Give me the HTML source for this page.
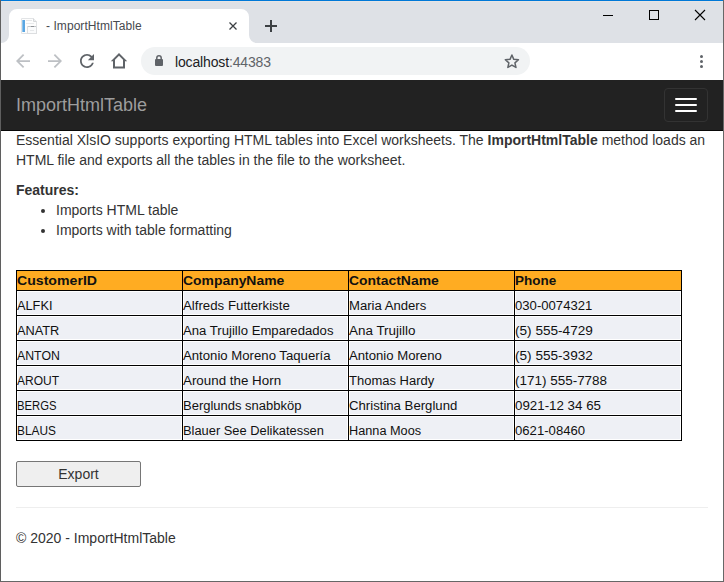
<!DOCTYPE html>
<html><head><meta charset="utf-8">
<style>
*{box-sizing:border-box}
html,body{margin:0;padding:0;width:724px;height:582px;overflow:hidden;background:#fff}
body{position:relative;font-family:"Liberation Sans",sans-serif}
.abs{position:absolute}
#strip{left:0;top:0;width:724px;height:43px;background:#dee1e6}
#blue{left:1px;top:0;width:722px;height:1px;background:#0078d7}
#blue2{left:1px;top:1px;width:722px;height:1px;background:#e7e5e4}
#bl{left:0;top:0;width:1px;height:582px;background:#5f5f5f}
#br{left:723px;top:0;width:1px;height:582px;background:#676767}
#bb{left:0;top:581px;width:724px;height:1px;background:#666}
#toolbar{left:1px;top:43px;width:722px;height:37px;background:#fff}
#omni{left:141px;top:47px;width:389px;height:28px;border-radius:14px;background:#f1f3f4}
.tabtitle{left:46px;top:18px;font-size:12px;color:#474a4f;letter-spacing:0.06px;white-space:nowrap;line-height:16px}
.url{left:175px;top:52.5px;font-size:14px;line-height:18px;letter-spacing:-0.15px;color:#202124;white-space:nowrap}
.url span{color:#5f6368}
#nav{left:1px;top:80px;width:722px;height:50px;background:#222}
#navb{left:1px;top:130px;width:722px;height:1px;background:#080808}
.brand{left:16px;top:95px;font-size:18px;line-height:20px;color:#9d9d9d;white-space:nowrap}
#toggle{left:664px;top:88px;width:44px;height:34px;border:1px solid #333;border-radius:4px}
.bar{left:675px;width:22px;height:2px;border-radius:1px;background:#fff}
#page{left:1px;top:80px;width:722px;height:501px;overflow:hidden}
.c{position:absolute;left:16px;width:692px;font-size:14px;line-height:20px;color:#333}
.c p{margin:0}
ul{margin:0;padding-left:40px}
#tbl{left:16px;top:270px;width:666px;height:171px;background:#000}
.cell{position:absolute;background:#eef0f5;box-shadow:inset 0 0 0 1px #fff;font-family:"Liberation Sans",sans-serif;font-size:12px;color:#111;white-space:nowrap;overflow:hidden}
.hd{background:#ffac22;box-shadow:none;font-weight:bold}
.t{position:absolute;left:0px;line-height:14px;transform-origin:0 0}
#btn{left:16px;top:461px;width:125px;height:26px;background:#efefef;border:1px solid #767676;border-radius:2px;font-size:14px;color:#333;text-align:center;line-height:24px}
#hr{left:16px;top:507px;width:692px;height:1px;background:#eee}
</style></head><body>
<div id="strip" class="abs"></div>
<svg class="abs" style="left:0;top:0" width="724" height="43">
  <path d="M1 43 A8 8 0 0 0 9 35 V17 A8 8 0 0 1 17 9 H241 A8 8 0 0 1 249 17 V35 A8 8 0 0 0 257 43 Z" fill="#fff"/>
</svg>
<div id="blue" class="abs"></div>
<div id="blue2" class="abs"></div>
<div id="toolbar" class="abs"></div>
<div id="omni" class="abs"></div>
<svg class="abs" style="left:0;top:0" width="724" height="80" id="icons">
  <!-- favicon -->
  <path d="M21.5 18.5 H33.5 L36.5 21.5 V33.5 H21.5 Z" fill="#fdfdfd" stroke="#e2e4e6" stroke-width="1"/>
  <path d="M33.5 18.5 V21.5 H36.5" fill="#eceef0" stroke="#d6d8da" stroke-width="1"/>
  <rect x="22" y="20" width="3" height="12" fill="#5aa6e2"/>
  <rect x="22" y="20" width="1" height="12" fill="#8cc4ee"/>
  <line x1="26" y1="20.5" x2="32" y2="20.5" stroke="#e4e6e8" stroke-width="1"/>
  <line x1="26" y1="23.5" x2="34" y2="23.5" stroke="#e8eaec" stroke-width="1"/>
  <rect x="27.5" y="26.5" width="9" height="7" fill="#fafbfc" stroke="#dcdee0" stroke-width="1"/>
  <line x1="28" y1="26.5" x2="36" y2="26.5" stroke="#c4c7ca" stroke-width="1"/>
  <line x1="31" y1="26.5" x2="34" y2="26.5" stroke="#8f9296" stroke-width="1"/>
  <line x1="30" y1="30.5" x2="34" y2="30.5" stroke="#e6e8ea" stroke-width="1"/>
  <!-- tab close -->
  <path d="M229.5 22.5 L236.5 29.5 M236.5 22.5 L229.5 29.5" stroke="#3c4043" stroke-width="1.25" fill="none"/>
  <!-- new tab plus -->
  <path d="M271 20 V32 M265 26 H277" stroke="#3c4043" stroke-width="2" fill="none"/>
  <!-- window controls -->
  <line x1="603" y1="15.5" x2="613" y2="15.5" stroke="#000" stroke-width="1"/>
  <rect x="649.5" y="10.5" width="9" height="9" fill="none" stroke="#000" stroke-width="1"/>
  <path d="M695 10 L705 20 M705 10 L695 20" stroke="#000" stroke-width="1.1" fill="none"/>
  <!-- back -->
  <g transform="translate(12.5,50.5) scale(0.875)"><path d="M20 11H7.83l5.59-5.59L12 4l-8 8 8 8 1.41-1.41L7.83 13H20v-2z" fill="#bdc0c4"/></g>
  <!-- forward -->
  <g transform="translate(44.5,50.5) scale(0.875)"><path d="M4 11h12.17l-5.59-5.59L12 4l8 8-8 8-1.41-1.41L16.17 13H4v-2z" fill="#bdc0c4"/></g>
  <!-- reload -->
  <g transform="translate(76.5,50.5) scale(0.875)"><path d="M17.65 6.35C16.2 4.9 14.21 4 12 4c-4.42 0-7.99 3.58-7.99 8s3.57 8 7.99 8c3.73 0 6.84-2.55 7.73-6h-2.08c-.82 2.33-3.04 4-5.65 4-3.31 0-6-2.69-6-6s2.69-6 6-6c1.66 0 3.14.69 4.22 1.78L13 11h7V4l-2.35 2.35z" fill="#5f6368"/></g>
  <!-- home -->
  <path d="M119 53 L127.2 61.2 H125 V68.5 H113 V61.2 H110.8 Z M119 55.8 L123 59.8 V66.5 H115 V59.8 Z" fill="#5f6368" fill-rule="evenodd"/>
  <!-- lock -->
  <rect x="155" y="59" width="8" height="7" rx="1" fill="#5f6368"/>
  <path d="M156.8 59.5 V58 A2.2 2.2 0 0 1 161.2 58 V59.5" stroke="#5f6368" stroke-width="1.5" fill="none"/>
  <!-- star -->
  <polygon points="511.90,55.00 513.77,59.33 518.46,59.77 514.92,62.88 515.96,67.48 511.90,65.07 507.84,67.48 508.88,62.88 505.34,59.77 510.03,59.33" fill="none" stroke="#5f6368" stroke-width="1.5" stroke-linejoin="round"/>
  <!-- menu dots -->
  <circle cx="701.5" cy="56.5" r="1.5" fill="#5f6368"/>
  <circle cx="701.5" cy="61.5" r="1.5" fill="#5f6368"/>
  <circle cx="701.5" cy="66.5" r="1.5" fill="#5f6368"/>
</svg>
<div class="abs tabtitle">- ImportHtmlTable</div>
<div class="abs url">localhost<span>:44383</span></div>

<div id="nav" class="abs"></div>
<div id="navb" class="abs"></div>
<div class="abs brand">ImportHtmlTable</div>
<div id="toggle" class="abs"></div>
<div class="abs bar" style="top:98px"></div>
<div class="abs bar" style="top:104px"></div>
<div class="abs bar" style="top:110px"></div>

<div class="c" style="top:130px">
<p>Essential XlsIO supports exporting HTML tables into Excel worksheets. The <b>ImportHtmlTable</b> method loads an HTML file and exports all the tables in the file to the worksheet.</p>
</div>
<div class="c" style="top:180px"><b>Features:</b>
<ul><li>Imports HTML table</li><li>Imports with table formatting</li></ul>
</div>

<div id="tbl" class="abs"></div>
<!--TBL-->
<div class="cell hd" style="left:17px;top:271px;width:165px;height:19px"><span class="t" style="top:3px;transform:scaleX(1.1765)">CustomerID</span></div>
<div class="cell hd" style="left:183px;top:271px;width:165px;height:19px"><span class="t" style="top:3px;transform:scaleX(1.1591)">CompanyName</span></div>
<div class="cell hd" style="left:349px;top:271px;width:165px;height:19px"><span class="t" style="top:3px;transform:scaleX(1.1604)">ContactName</span></div>
<div class="cell hd" style="left:515px;top:271px;width:166px;height:19px"><span class="t" style="top:3px;transform:scaleX(1.1220)">Phone</span></div>
<div class="cell" style="left:17px;top:291px;width:165px;height:24px"><span class="t" style="top:8px;transform:scaleX(1.0634)">ALFKI</span></div>
<div class="cell" style="left:183px;top:291px;width:165px;height:24px"><span class="t" style="top:8px;transform:scaleX(1.1041)">Alfreds Futterkiste</span></div>
<div class="cell" style="left:349px;top:291px;width:165px;height:24px"><span class="t" style="top:8px;transform:scaleX(1.0928)">Maria Anders</span></div>
<div class="cell" style="left:515px;top:291px;width:166px;height:24px"><span class="t" style="top:8px;transform:scaleX(1.0928)">030-0074321</span></div>
<div class="cell" style="left:17px;top:316px;width:165px;height:24px"><span class="t" style="top:8px;transform:scaleX(1.0641)">ANATR</span></div>
<div class="cell" style="left:183px;top:316px;width:165px;height:24px"><span class="t" style="top:8px;transform:scaleX(1.0949)">Ana Trujillo Emparedados</span></div>
<div class="cell" style="left:349px;top:316px;width:165px;height:24px"><span class="t" style="top:8px;transform:scaleX(1.1188)">Ana Trujillo</span></div>
<div class="cell" style="left:515px;top:316px;width:166px;height:24px"><span class="t" style="top:8px;transform:scaleX(1.1324)">(5) 555-4729</span></div>
<div class="cell" style="left:17px;top:341px;width:165px;height:24px"><span class="t" style="top:8px;transform:scaleX(1.0249)">ANTON</span></div>
<div class="cell" style="left:183px;top:341px;width:165px;height:24px"><span class="t" style="top:8px;transform:scaleX(1.0971)">Antonio Moreno Taquería</span></div>
<div class="cell" style="left:349px;top:341px;width:165px;height:24px"><span class="t" style="top:8px;transform:scaleX(1.0953)">Antonio Moreno</span></div>
<div class="cell" style="left:515px;top:341px;width:166px;height:24px"><span class="t" style="top:8px;transform:scaleX(1.1324)">(5) 555-3932</span></div>
<div class="cell" style="left:17px;top:366px;width:165px;height:24px"><span class="t" style="top:8px;transform:scaleX(1.0005)">AROUT</span></div>
<div class="cell" style="left:183px;top:366px;width:165px;height:24px"><span class="t" style="top:8px;transform:scaleX(1.1137)">Around the Horn</span></div>
<div class="cell" style="left:349px;top:366px;width:165px;height:24px"><span class="t" style="top:8px;transform:scaleX(1.0823)">Thomas Hardy</span></div>
<div class="cell" style="left:515px;top:366px;width:166px;height:24px"><span class="t" style="top:8px;transform:scaleX(1.1221)">(171) 555-7788</span></div>
<div class="cell" style="left:17px;top:391px;width:165px;height:24px"><span class="t" style="top:8px;transform:scaleX(0.9408)">BERGS</span></div>
<div class="cell" style="left:183px;top:391px;width:165px;height:24px"><span class="t" style="top:8px;transform:scaleX(1.0826)">Berglunds snabbköp</span></div>
<div class="cell" style="left:349px;top:391px;width:165px;height:24px"><span class="t" style="top:8px;transform:scaleX(1.0970)">Christina Berglund</span></div>
<div class="cell" style="left:515px;top:391px;width:166px;height:24px"><span class="t" style="top:8px;transform:scaleX(1.1105)">0921-12 34 65</span></div>
<div class="cell" style="left:17px;top:416px;width:165px;height:24px"><span class="t" style="top:8px;transform:scaleX(0.9872)">BLAUS</span></div>
<div class="cell" style="left:183px;top:416px;width:165px;height:24px"><span class="t" style="top:8px;transform:scaleX(1.0725)">Blauer See Delikatessen</span></div>
<div class="cell" style="left:349px;top:416px;width:165px;height:24px"><span class="t" style="top:8px;transform:scaleX(1.0590)">Hanna Moos</span></div>
<div class="cell" style="left:515px;top:416px;width:166px;height:24px"><span class="t" style="top:8px;transform:scaleX(1.0940)">0621-08460</span></div>
<!--/TBL-->
<div id="btn" class="abs">Export</div>
<div id="hr" class="abs"></div>
<div class="c" style="top:528px">© 2020 - ImportHtmlTable</div>

<div id="bl" class="abs"></div>
<div id="br" class="abs"></div>
<div id="bb" class="abs"></div>
</body></html>
